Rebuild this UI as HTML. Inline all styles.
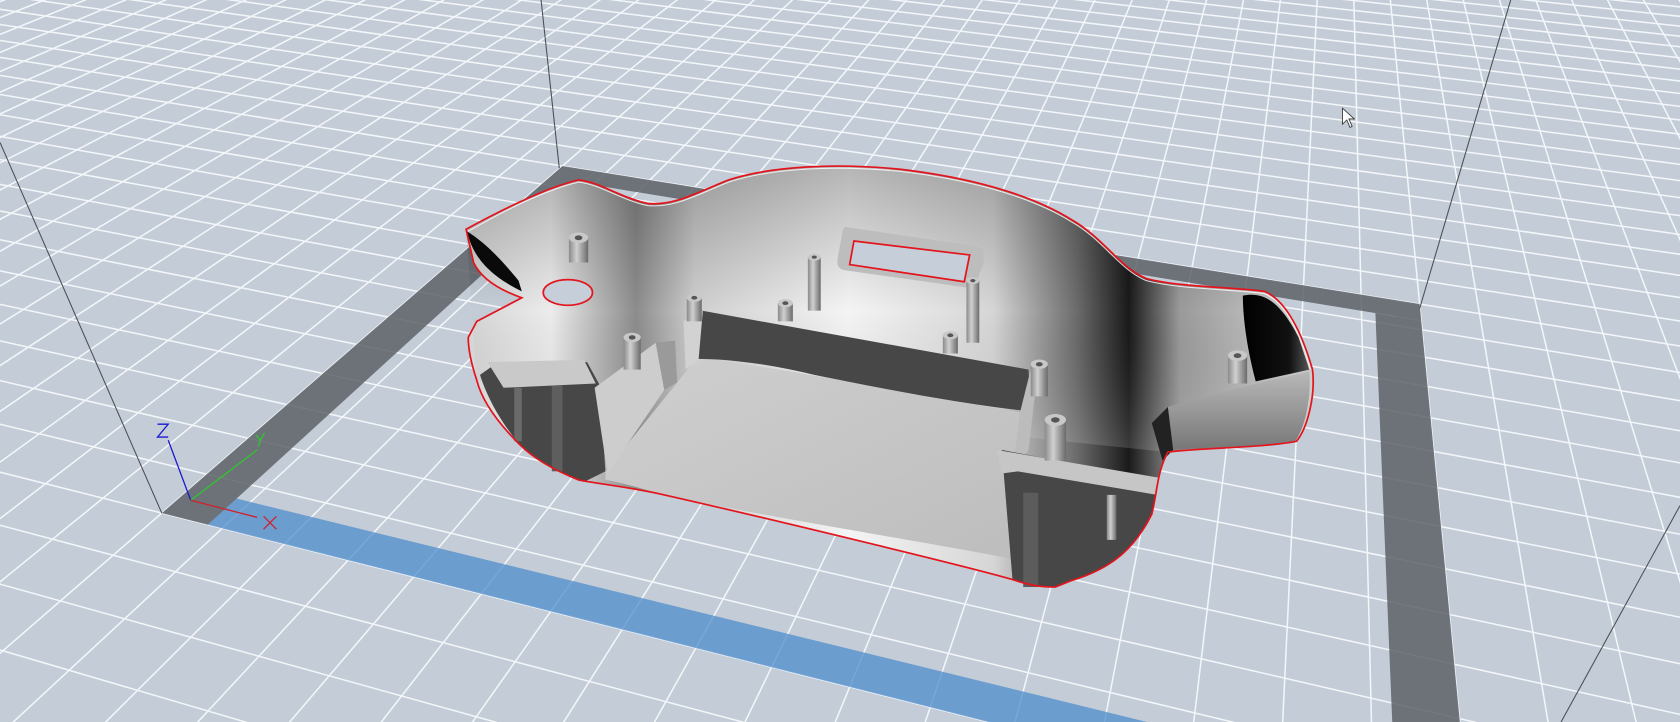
<!DOCTYPE html>
<html><head><meta charset="utf-8"><style>
html,body{margin:0;padding:0;background:#c6cfd9;overflow:hidden;width:1680px;height:722px}
svg{display:block;position:absolute;left:0;top:0}
</style></head><body>
<svg id="s" width="1680" height="722" viewBox="0 0 1568 674" preserveAspectRatio="none" xmlns="http://www.w3.org/2000/svg">
<defs>
<linearGradient id="gin" x1="435" y1="0" x2="1228" y2="0" gradientUnits="userSpaceOnUse">
<stop offset="0" stop-color="#d4d4d4"/>
<stop offset="0.1" stop-color="#ececec"/>
<stop offset="0.2" stop-color="#8c8c8c"/>
<stop offset="0.27" stop-color="#cfcfcf"/>
<stop offset="0.45" stop-color="#f4f4f4"/>
<stop offset="0.62" stop-color="#d6d6d6"/>
<stop offset="0.72" stop-color="#6a6a6a"/>
<stop offset="0.78" stop-color="#1a1a1a"/>
<stop offset="0.84" stop-color="#9a9a9a"/>
<stop offset="0.92" stop-color="#b8b8b8"/>
<stop offset="1" stop-color="#cfcfcf"/>
</linearGradient>
<linearGradient id="gv" x1="0" y1="160" x2="0" y2="420" gradientUnits="userSpaceOnUse">
<stop offset="0" stop-color="#000" stop-opacity="0.25"/>
<stop offset="0.5" stop-color="#000" stop-opacity="0"/>
<stop offset="1" stop-color="#fff" stop-opacity="0.15"/>
</linearGradient>
<linearGradient id="cyl" x1="0" y1="0" x2="1" y2="0">
<stop offset="0" stop-color="#8a8a8a"/><stop offset="0.4" stop-color="#d0d0d0"/><stop offset="1" stop-color="#6a6a6a"/>
</linearGradient>
<linearGradient id="ear" x1="0" y1="0" x2="1" y2="0">
<stop offset="0" stop-color="#000"/><stop offset="0.7" stop-color="#111"/><stop offset="1" stop-color="#555"/>
</linearGradient>
<linearGradient id="earf" x1="0" y1="0" x2="0" y2="1">
<stop offset="0" stop-color="#b8b8b8"/><stop offset="1" stop-color="#777"/>
</linearGradient>
<linearGradient id="fl" x1="0" y1="0" x2="1" y2="1">
<stop offset="0" stop-color="#cfcfcf"/><stop offset="1" stop-color="#bdbdbd"/>
</linearGradient>
</defs>
<rect width="1568" height="674" fill="#c4cdd7"/>
<g id="grid" stroke="#f4f7fa" stroke-width="1.4" fill="none"></g>
<g id="bands"></g>
<g stroke="#4c4f54" stroke-width="1" fill="none">
<line x1="0" y1="133" x2="151" y2="479"/>
<line x1="505" y1="0" x2="522" y2="157"/>
<line x1="1410" y1="0" x2="1325" y2="288"/>
<line x1="1568" y1="472" x2="1457" y2="674"/>
</g>
<g>
<path d="M435,214 C470,195 510,175 540,168 C560,170 580,185 605,190 C630,192 650,180 680,168 C720,155 780,152 840,158 C900,165 960,180 1000,205 C1030,222 1045,250 1070,260 C1100,268 1150,268 1180,272 C1200,280 1215,310 1225,345 C1228,370 1220,400 1210,412 C1180,418 1120,418 1090,422 C1080,440 1080,460 1075,480 C1060,510 1040,530 1000,542 L985,548 C970,548 960,546 945,541 C900,528 700,480 620,462 C590,455 560,452 540,448 C520,440 500,430 485,415 C465,395 450,375 445,355 C440,340 437,325 437,315 L445,300 L487,278 C470,272 450,262 442,245 Z" fill="url(#gin)"/>
<path d="M435,214 C470,195 510,175 540,168 C560,170 580,185 605,190 C630,192 650,180 680,168 C720,155 780,152 840,158 C900,165 960,180 1000,205 C1030,222 1045,250 1070,260 C1100,268 1150,268 1180,272 L1225,345 L1090,422 L445,355 Z" fill="url(#gv)"/>
<path d="M436,216 C440,235 452,255 487,272 L484,262 C470,245 455,228 436,216 Z" fill="#0a0a0a"/>
<ellipse cx="530" cy="273" rx="23" ry="12" fill="#c6cfd9" stroke="#e3141c" stroke-width="1.6"/>
<path d="M462,340 L548,338 L560,360 L565,440 L545,450 C520,440 500,430 485,415 C468,395 455,372 448,350 Z" fill="#474747"/>
<path d="M455,338 L545,336 L556,358 L470,362 Z" fill="#c9c9c9"/>
<rect x="480" y="362" width="7" height="50" fill="#6a6a6a"/>
<rect x="515" y="360" width="10" height="80" fill="#5e5e5e"/>
<path d="M565,440 L650,335 C700,338 800,358 952,385 L945,522 C900,512 700,480 620,462 C595,455 578,450 565,448 Z" fill="url(#fl)"/>
<path d="M655,290 L960,345 L962,384 C900,378 820,362 760,350 C720,340 680,335 650,335 Z" fill="#474747"/>
<path d="M555,362 L612,320 L620,364 L567,442 Z" fill="#cdcdcd"/>
<path d="M612,320 L630,318 L632,357 L620,364 Z" fill="#9a9a9a"/>
<path d="M638,300 L656,290 L652,336 L640,345 Z" fill="#d2d2d2"/>
<path d="M952,385 L962,345 L968,350 L960,420 L945,440 Z" fill="#bcbcbc"/>
<path d="M935,420 L1080,448 C1080,460 1078,470 1075,480 C1060,510 1040,530 1000,542 L985,548 C970,548 960,546 945,541 Z" fill="#474747"/>
<path d="M930,420 L1082,446 L1080,462 L950,440 L935,442 Z" fill="#c6c6c6"/>
<rect x="955" y="460" width="14" height="88" fill="#5c5c5c"/>
<rect x="1033" y="462" width="9" height="42" fill="url(#cyl)"/>
<path d="M1160,276 C1180,272 1195,282 1212,315 L1222,345 L1172,356 C1165,330 1160,300 1160,276 Z" fill="url(#ear)"/>
<path d="M1090,380 C1130,368 1180,356 1222,347 C1224,372 1218,400 1208,413 C1170,417 1120,418 1095,420 Z" fill="url(#earf)"/>
<path d="M1075,395 L1090,380 L1095,420 L1085,430 Z" fill="#222"/>
<path d="M790,212 L912,230 Q920,232 918,245 L912,262 Q908,270 900,268 L787,252 Q780,250 782,240 L786,218 Q787,211 790,212 Z" fill="#bdbdbd"/>
<path d="M797,225 L905,238 L900,263 L793,247 Z" fill="#c6cfd9" stroke="#e3141c" stroke-width="1.6"/>
<g id="posts"></g>
<path d="M435,214 C470,195 510,175 540,168 C560,170 580,185 605,190 C630,192 650,180 680,168 C720,155 780,152 840,158 C900,165 960,180 1000,205 C1030,222 1045,250 1070,260 C1100,268 1150,268 1180,272 C1200,280 1215,310 1225,345 C1228,370 1220,400 1210,412 C1180,418 1120,418 1090,422 C1080,440 1080,460 1075,480 C1060,510 1040,530 1000,542 L985,548 C970,548 960,546 945,541 C900,528 700,480 620,462 C590,455 560,452 540,448 C520,440 500,430 485,415 C465,395 450,375 445,355 C440,340 437,325 437,315 L445,300 L487,278 C470,272 450,262 442,245 Z" fill="none" stroke="#e3141c" stroke-width="1.6"/>
<path d="M437,216 C470,197 510,177 540,170 C560,172 580,187 605,192 C630,194 650,182 680,170 C720,157 780,154 840,160 C900,167 960,182 1000,207 C1030,224 1045,252 1070,262 C1100,270 1150,270 1180,274 C1200,282 1214,312 1223,345" fill="none" stroke="#fff" stroke-width="1" opacity="0.8"/>
</g>
<g stroke-width="1.2" fill="none">
<line x1="178" y1="467" x2="157" y2="411" stroke="#1a1ad0"/>
<line x1="178" y1="467" x2="240" y2="420" stroke="#2ec82e"/>
<line x1="178" y1="467" x2="240" y2="483" stroke="#d0202a"/>
<path d="M147,396 L157,396 L147,408 L157,408" stroke="#1a1ad0"/>
<path d="M239,406 L243,411 L247,404 M243,411 L241,417" stroke="#2ec82e"/>
<path d="M246,482 L258,494 M258,482 L246,494" stroke="#d0202a"/>
</g>
<path d="M1253,101 L1253,116 L1257,112 L1260,119 L1262,118 L1259,111 L1264,111 Z" fill="#fff" stroke="#333" stroke-width="0.8"/>
</svg>
<script>
(function(){
var NS="http://www.w3.org/2000/svg";
var a=-0.2257,b=0.5144,VU=[-4043,-581],VA=[1252,-475],O=[151,479];
function P(u,v){var D=a*u+b*v+1;return [(a*u*VU[0]+b*v*VA[0]+O[0])/D,(a*u*VU[1]+b*v*VA[1]+O[1])/D];}
var g=document.getElementById('grid');
function line(p,q,par){var l=document.createElementNS(NS,'line');l.setAttribute('x1',p[0].toFixed(1));l.setAttribute('y1',p[1].toFixed(1));l.setAttribute('x2',q[0].toFixed(1));l.setAttribute('y2',q[1].toFixed(1));par.appendChild(l);}
var Nu=17,Nv=13;
for(var i=-26;i<=48;i++){var u=i/Nu;var vmin=Math.max(-1.2,(0.06-1-a*u)/b);line(P(u,vmin),P(u,4),g);}
for(var j=-16;j<=55;j++){var v=j/Nv;var umax=Math.min(3,(1+b*v-0.06)/(-a));var umin=-2.5;if(umax<=umin)continue;line(P(umin,v),P(umax,v),g);}
var bd=document.getElementById('bands');
function quad(u0,u1,v0,v1,col,op){var pts=[P(u0,v0),P(u1,v0),P(u1,v1),P(u0,v1)];var p=document.createElementNS(NS,'polygon');p.setAttribute('points',pts.map(function(x){return x[0].toFixed(1)+','+x[1].toFixed(1)}).join(' '));p.setAttribute('fill',col);p.setAttribute('fill-opacity',op);bd.appendChild(p);}
var w=0.045,w2=0.05;
quad(0,w,0,1,'#5d6167',0.85);
quad(w,1,1-w2,1,'#5d6167',0.85);
quad(1-w,1,0,1-w2,'#5d6167',0.85);
quad(w,1-w,0,w2,'#4f8ccc',0.75);
var posts=[[540,222,245,9],[760,240,290,6],[648,278,300,7],[590,315,345,8],[733,283,300,7],[887,313,330,7],[908,262,320,6],[970,340,370,8],[985,392,430,10],[1155,332,358,9]];
var pg=document.getElementById('posts');
posts.forEach(function(p){var x=p[0],y0=p[1],y1=p[2],r=p[3];
var rc=document.createElementNS(NS,'rect');rc.setAttribute('x',x-r);rc.setAttribute('y',y0);rc.setAttribute('width',2*r);rc.setAttribute('height',y1-y0);rc.setAttribute('fill','url(#cyl)');pg.appendChild(rc);
var e=document.createElementNS(NS,'ellipse');e.setAttribute('cx',x);e.setAttribute('cy',y0);e.setAttribute('rx',r);e.setAttribute('ry',r*0.55);e.setAttribute('fill','#c8c8c8');pg.appendChild(e);
var h=document.createElementNS(NS,'ellipse');h.setAttribute('cx',x);h.setAttribute('cy',y0);h.setAttribute('rx',r*0.4);h.setAttribute('ry',r*0.25);h.setAttribute('fill','#555');pg.appendChild(h);});
})();
</script>
</body></html>
